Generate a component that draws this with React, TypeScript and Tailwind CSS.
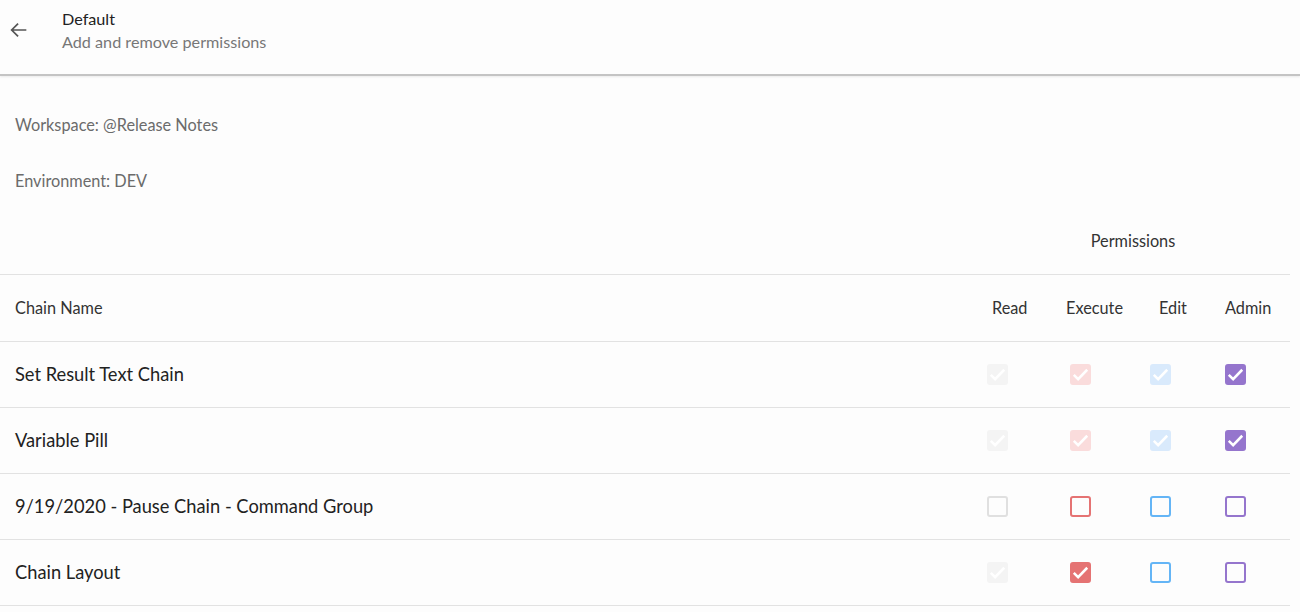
import React from 'react';

type Perm = 'on' | 'off' | 'dimOn';

const rows: { name: string; perms: Perm[] }[] = [
  { name: 'Set Result Text Chain', perms: ['dimOn', 'dimOn', 'dimOn', 'on'] },
  { name: 'Variable Pill', perms: ['dimOn', 'dimOn', 'dimOn', 'on'] },
  { name: '9/19/2020 - Pause Chain - Command Group', perms: ['off', 'off', 'off', 'off'] },
  { name: 'Chain Layout', perms: ['dimOn', 'on', 'off', 'off'] },
];

// per column: width, header offset, checkbox offset, colours
const cols = [
  { label: 'Read', w: 'w-[74px]', th: 'pl-[16px]', cb: 'pl-[11px]', on: 'bg-[#bdbdbd] border-[#bdbdbd]', off: 'border-[#e0e0e0]', dim: 'bg-[#f4f4f4] border-[#f4f4f4]' },
  { label: 'Execute', w: 'w-[88px]', th: 'pl-[16px]', cb: 'pl-[20px]', on: 'bg-[#e57373] border-[#e57373]', off: 'border-[#e57373]', dim: 'bg-[#fadcdc] border-[#fadcdc]' },
  { label: 'Edit', w: 'w-[71px]', th: 'pl-[21px]', cb: 'pl-[12px]', on: 'bg-[#64b5f6] border-[#64b5f6]', off: 'border-[#64b5f6]', dim: 'bg-[#d9eafc] border-[#d9eafc]' },
  { label: 'Admin', w: 'w-[81px]', th: 'pl-[16px]', cb: 'pl-[16px]', on: 'bg-[#9575cd] border-[#9575cd]', off: 'border-[#9575cd]', dim: 'bg-[#e6dcf4] border-[#e6dcf4]' },
];

function Box({ state, col }: { state: Perm; col: (typeof cols)[number] }) {
  const cls = state === 'on' ? col.on : state === 'dimOn' ? col.dim : col.off;
  return (
    <div className={`w-[21px] h-[21px] rounded-[3px] border-2 flex items-center justify-center ${cls}`}>
      {state !== 'off' && (
        <svg viewBox="0 0 24 24" className="w-[19px] h-[19px] shrink-0" fill="none">
          <path d="M3.5 12.5l5.5 5.5L20.5 6" stroke="white" strokeWidth="3.2" />
        </svg>
      )}
    </div>
  );
}

export default function App() {
  return (
    <div className="min-h-screen bg-[#fdfdfd] text-[#222]" style={{ fontFamily: 'Lato, "Noto Sans", sans-serif' }}>
      {/* Header */}
      <div className="h-[76px] flex items-start border-b-2 border-[#c4c4c4] shadow-[0_1px_2px_rgba(0,0,0,0.08)]">
        <div className="pl-[8px] pt-[19px] w-[62px]">
          <svg viewBox="0 0 24 24" className="w-[22px] h-[22px]" fill="none">
            <path d="M20 12H4.5M11 5l-7 7 7 7" stroke="#555" strokeWidth="1.9" />
          </svg>
        </div>
        <div className="pt-[8px]">
          <div className="text-[16.2px] leading-[22px] text-[#222]">Default</div>
          <div className="text-[16.2px] leading-[24px] text-[#777]">Add and remove permissions</div>
        </div>
      </div>

      {/* Info */}
      <div className="pl-[15px] pt-[38px] text-[16.3px] text-[#6b6b6b]">
        <div className="leading-[22px]">Workspace: @Release Notes</div>
        <div className="leading-[22px] mt-[34px]">Environment: DEV</div>
      </div>

      {/* Table */}
      <div className="w-[1290px] mt-[37px]">
        <div className="h-[46px] flex border-b border-[#e2e2e2]">
          <div className="flex-1" />
          <div className="w-[314px] pt-[1px] text-center text-[16.3px] leading-[22px] text-[#333]">Permissions</div>
        </div>
        <div className="h-[67px] flex items-center border-b border-[#e2e2e2] text-[16.3px] text-[#333]">
          <div className="flex-1 pl-[15px]">Chain Name</div>
          {cols.map((c) => (
            <div key={c.label} className={`${c.w} ${c.th}`}>{c.label}</div>
          ))}
        </div>
        {rows.map((r) => (
          <div key={r.name} className="h-[66px] flex items-center border-b border-[#e2e2e2]">
            <div className="flex-1 pl-[15px] text-[18.3px] text-[#222]">{r.name}</div>
            {cols.map((c, i) => (
              <div key={c.label} className={`${c.w} ${c.cb}`}>
                <Box state={r.perms[i]} col={c} />
              </div>
            ))}
          </div>
        ))}
      </div>
    </div>
  );
}
